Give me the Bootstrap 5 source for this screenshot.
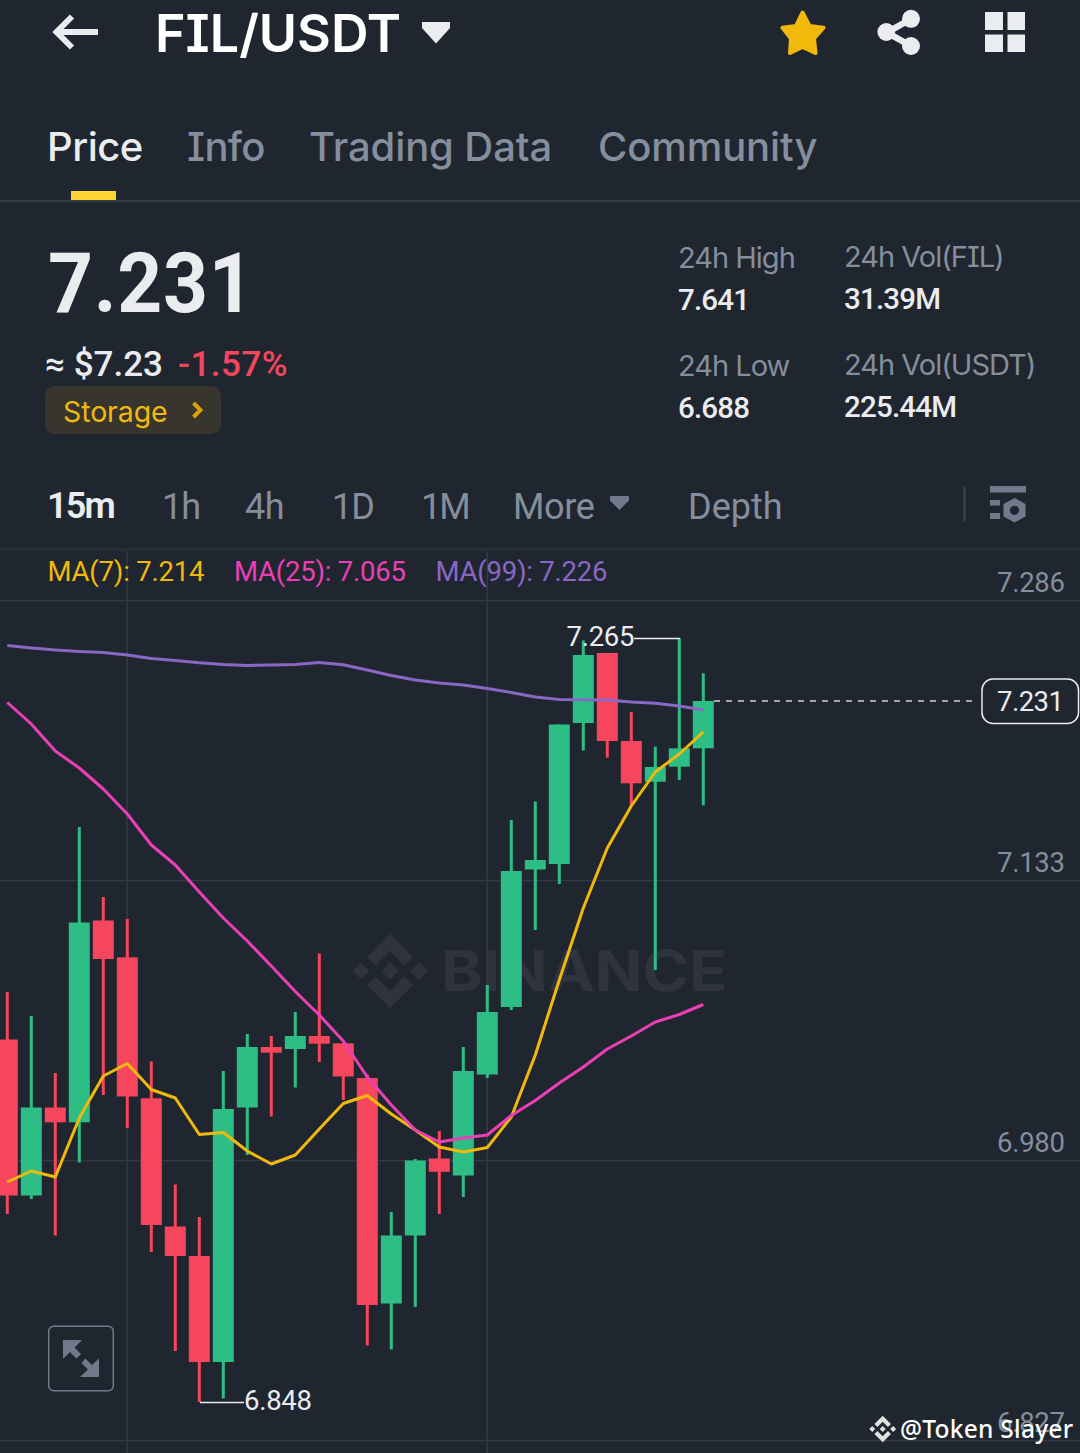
<!DOCTYPE html>
<html lang="en">
<head>
<meta charset="utf-8">
<meta name="viewport" content="width=device-width, initial-scale=1">
<title>FIL/USDT</title>
<link href="https://cdn.jsdelivr.net/npm/bootstrap@5.3.0/dist/css/bootstrap.min.css" rel="stylesheet">
<style>
  body { background: #202630; color: #eaecef; font-family: Inter, "Liberation Sans", sans-serif; font-feature-settings: "cv08" 1; width: 1080px; overflow-x: hidden; }
  svg { display: block; }
  .din { font-family: Roboto, "Liberation Sans", sans-serif; white-space: nowrap; }
  .topbar { height: 91px; padding: 0 54px 25px 52px; }
  .pair { font-size: 52px; line-height: 66px; padding-top: 2px; font-weight: 600; color: #fff; width: 244px; margin-left: 57px; white-space: nowrap; }
  .tabbar { height: 111px; padding-top: 1px; border-bottom: 2px solid #333b47; padding-left: 47px; }
  .tabbar .nav-link { position: relative; padding: 1px 0 0; font-size: 40px; line-height: 107px; font-weight: 500; color: #848e9c; white-space: nowrap; letter-spacing: -.1px; }
  .tabbar .nav-link.active { color: #eaecef; letter-spacing: -.5px; }
  .tabbar .nav-link.active::after { content: ""; position: absolute; left: 24px; bottom: 0; width: 45px; height: 9px; background: #fcd535; }
  .w-t1 { width: 140px; } .w-t2 { width: 122px; letter-spacing: -.7px !important; } .w-t3 { width: 289px; } .w-t4 { width: 230px; }
  .summary { height: 262px; padding: 40px 0 0 45px; }
  .bigprice { display: inline-block; transform: scaleX(.945); transform-origin: 0 0; font-size: 83px; line-height: 84px; font-weight: 700; margin: 0 0 16px 3px; letter-spacing: .8px; vertical-align: top; }
  .subline { font-size: 35px; line-height: 45px; height: 44px; font-weight: 500; }
  .down { color: #f6465d; letter-spacing: .5px; }
  .pill { width: 176px; height: 48px; border-radius: 10px; background: #37352d; color: #f0b90b; font-size: 28.5px; padding: 0 18px; letter-spacing: -.1px; }
  .stat { margin-bottom: 24px; white-space: nowrap; }
  .stat-k { font-size: 29px; line-height: 42px; color: #848e9c; letter-spacing: -1px; }
  .stat-v { font-size: 29.5px; line-height: 42px; font-weight: 500; letter-spacing: -.8px; }
  .col-a { width: 166px; margin-top: -5px; }
  .col-b { width: 236px; margin-top: -6px; }
  .intervals { height: 87px; border-bottom: 3px solid #2a303b; font-size: 36px; line-height: 84px; color: #848e9c; padding: 0 54px 0 47px; }
  .intervals span { padding-top: 2px; }
  .intervals .on { color: #eaecef; font-weight: 600; letter-spacing: -1.8px; padding-top: 0; }
  .w1 { width: 115px; } .w2 { width: 83px; letter-spacing: -1px; } .w3 { width: 87px; letter-spacing: -.6px; } .w4 { width: 89px; letter-spacing: -1px; } .w5 { width: 92px; letter-spacing: -2px; } .w6 { width: 97px; letter-spacing: -.4px; } .w7 { width: 78px; }
  .vrule { width: 3px; height: 36px; background: #333b47; margin-top: -5px; }
  .chart text { font-family: Roboto, "Liberation Sans", sans-serif; font-size: 27.5px; }
  .chart .wm { font-family: Inter, sans-serif; font-size: 56.5px; font-weight: 700; font-feature-settings: normal; }
  .chart .tag { font-family: "Noto Sans", sans-serif; font-size: 24.5px; font-weight: 500; }
</style>
</head>
<body>
<header class="topbar d-flex align-items-center">
  <svg width="46" height="38" viewBox="0 0 46 38" fill="none" stroke="#eaecef" stroke-width="6"><path d="M46 18H5M20 2.500 4.500 18 20 33.500"/></svg>
  <h1 class="pair mb-0">FIL/USDT</h1>
  <svg width="28" height="22" viewBox="0 0 28 22" style="margin-left:23px"><path fill="#eaecef" d="M0 0h28v6L14 21.500 0 6z"/></svg>
  <svg class="ms-auto" width="46" height="48" viewBox="0 0 46 48"><path fill="#f0b90b" stroke="#f0b90b" stroke-width="4" stroke-linejoin="round" d="M22.500 3.500 29.500 17 43.500 18.700 34 29.500 35.500 44 22.500 38 10 44 11 29.500 2.500 18.700 16 17z"/></svg>
  <svg width="44" height="48" viewBox="0 0 44 48" style="margin-left:51px"><g fill="#eaecef"><circle cx="9.300" cy="23" r="8.900"/><circle cx="34" cy="9.800" r="9"/><circle cx="34" cy="37" r="9"/></g><path d="M34 10 10 23.500 34 37" fill="none" stroke="#eaecef" stroke-width="6.500"/></svg>
  <svg width="41" height="40" viewBox="0 0 41 40" fill="#eaecef" style="margin-left:64px;margin-top:-2px"><path d="M0 0h18v18H0zM22.500 0H40v18H22.500zM0 22.500h18V40H0zM22.500 22.500H40V40H22.500z"/></svg>
</header>
<nav class="tabbar nav flex-nowrap">
  <a class="nav-link active w-t1">Price</a>
  <a class="nav-link w-t2">Info</a>
  <a class="nav-link w-t3">Trading Data</a>
  <a class="nav-link w-t4">Community</a>
</nav>
<section class="summary d-flex">
  <div style="width:633px">
    <div class="bigprice din">7.231</div>
    <div class="subline din d-flex"><span style="width:133px">≈ $7.23</span><span class="down">-1.57%</span></div>
    <div class="pill d-flex align-items-center justify-content-between"><span class="pt-1">Storage</span>
      <svg width="11" height="18" viewBox="0 0 11 18" fill="none" stroke="#d9a305" stroke-width="4"><path d="M1.500 2 8.500 9 1.500 16"/></svg>
    </div>
  </div>
  <div class="col-a">
    <div class="stat"><div class="stat-k">24h High</div><div class="stat-v din">7.641</div></div>
    <div class="stat"><div class="stat-k">24h Low</div><div class="stat-v din">6.688</div></div>
  </div>
  <div class="col-b">
    <div class="stat"><div class="stat-k">24h Vol(FIL)</div><div class="stat-v din">31.39M</div></div>
    <div class="stat"><div class="stat-k">24h Vol(USDT)</div><div class="stat-v din">225.44M</div></div>
  </div>
</section>
<div class="intervals din d-flex align-items-center">
  <span class="on w1">15m</span><span class="w2">1h</span><span class="w3">4h</span><span class="w4">1D</span><span class="w5">1M</span><span class="w6">More</span>
  <svg class="w7" height="14" viewBox="0 0 78 14" style="margin-top:-6px"><path fill="#707a8a" d="M0 0h19v4.500L9.500 14 0 4.500z"/></svg>
  <span>Depth</span>
  <span class="vrule ms-auto"></span>
  <svg width="36" height="37" viewBox="0 0 36 37" fill="#707a8a" style="margin-left:24px;margin-top:-4px"><path d="M0 0h36v6.500H0zM0 14h10v5.500H0zM0 27h10v6H0z"/><path fill-rule="evenodd" d="M24.500 12 35.500 18v12.500L24.500 36.500 13.500 30.500V18zM24.500 19.700a4.600 4.600 0 1 0 0 9.200 4.600 4.600 0 1 0 0-9.200z"/></svg>
</div>
<svg class="chart" width="1080" height="902" viewBox="0 551 1080 902">
  <defs>
    <g id="bn"><path d="M0-37 23-14 14.500-5.500 0-20-14.500-5.500-23-14zM0 37 23 14 14.500 5.500 0 20-14.500 5.500-23 14zM0-8.500 8.500 0 0 8.500-8.500 0zM-29-8.500-20.500 0-29 8.500-37.500 0zM29-8.500 37.500 0 29 8.500 20.500 0z"/></g>
  </defs>
  <g fill="#2f333e"><use href="#bn" x="390" y="971"/><text class="wm" x="441" y="991" textLength="286" lengthAdjust="spacingAndGlyphs">BINANCE</text></g>
  <path d="M0 600.500H1080M0 880.500H1080M0 1160.500H1080M0 1440.500H1080M127.200 551V1453M487.300 551V1453" stroke="#333a46" stroke-width="1.500"/>
  <g id="candles"></g>
  <g id="lines" fill="none" stroke-width="3" stroke-linejoin="round"></g>
  <path d="M634 638.500H680M200 1402.500H244" stroke="#eaecef" stroke-width="1.500"/>
  <path d="M714 701H973" stroke="#d0d2d6" stroke-width="1.600" stroke-dasharray="6 6"/>
  <rect x="982" y="679" width="96.500" height="44.500" rx="11" fill="#202630" stroke="#eaecef" stroke-width="1.500"/>
  <g fill="#eaecef">
    <text x="566.500" y="646" textLength="68">7.265</text>
    <text x="244" y="1410" textLength="68">6.848</text>
    <text x="997" y="711" textLength="67">7.231</text>
  </g>
  <text x="47.500" y="581" textLength="157" fill="#f0b90b">MA(7): 7.214</text>
  <text x="234" y="581" textLength="172" fill="#eb40b5">MA(25): 7.065</text>
  <text x="435.500" y="581" textLength="172" fill="#8a67c5">MA(99): 7.226</text>
  <g fill="#848e9c">
    <text x="997" y="592" textLength="68">7.286</text>
    <text x="997" y="872" textLength="68">7.133</text>
    <text x="997" y="1152" textLength="68">6.980</text>
    <text x="997" y="1432" textLength="68">6.827</text>
  </g>
  <rect x="48.700" y="1326.200" width="64.600" height="64.600" rx="5" fill="none" stroke="#707a8a" stroke-width="1.500"/>
  <path fill="#707a8a" d="M63 1340H82L74.500 1347.500 81 1354 76.500 1358.500 70 1352 63 1359zM99 1377H80L88 1369.500 81.500 1363 85.500 1358.500 92 1365 99 1358.500z"/>
  <use href="#bn" transform="translate(882.700 1429) scale(.36)" fill="#e0e0e0"/>
  <text class="tag" x="900" y="1438" textLength="173" fill="#fff">@Token Slayer</text>
</svg>
<script src="https://cdn.jsdelivr.net/npm/bootstrap@5.3.0/dist/js/bootstrap.bundle.min.js"></script>
<script>
  // Each candle: direction, wick top, body top, body bottom, wick bottom
  const candles = [
    ['d',992,1039.5,1195.5,1214],['u',1016,1107.5,1195.5,1199],['d',1073,1107.5,1122.3,1235.5],['u',827,922.5,1122.3,1162.5],
    ['d',897,920.5,959,1095],['d',919,957.3,1096.5,1128],['d',1061.5,1098.3,1225,1252],['d',1184.5,1226.5,1256,1351],
    ['d',1217,1256,1362,1402],['u',1071,1109,1362,1398.5],['u',1034,1047,1107.5,1155],['d',1036,1047,1052.7,1116.5],
    ['u',1012,1036,1049,1087.5],['d',953.5,1036,1043.7,1062],['d',1043,1043.3,1076.5,1100],['d',1074.5,1078,1305,1345.5],
    ['u',1212,1235.5,1303.5,1349.5],['u',1159,1160.5,1235.5,1307],['d',1131,1158.5,1171.8,1214],['u',1047,1071,1175.5,1197],
    ['u',985,1012,1074.5,1078],['u',820,871,1007,1010],['u',801.5,860,869.5,930],['u',724.5,724.5,864,884],
    ['u',640.5,655,723,750.5],['d',653,653,741,757.7],['d',712,741,783.3,806],['u',746.7,767,781.7,970],
    ['u',638,748.3,766.7,780],['u',673.3,701,748.3,805.3]
  ];
  const averages = {
    '#8a67c5': [645.5,648,650,651.5,652.5,655,658.5,660.5,662.8,664.5,665.5,665,664.5,662.5,664.8,670,675.5,680,683,685,688.5,692.5,697,699.5,699.8,700,702,703.3,706,710],
    '#f0b90b': [1182,1171,1177,1118,1076,1063.5,1089.5,1098,1134.5,1132.5,1151,1164,1155,1129,1103.5,1095.5,1114,1130,1147,1152,1147.5,1117,1055,980,908,848,806,772,754,732],
    '#eb40b5': [702.5,724,751,768,789,814,845,865,892,918,941,966,991.5,1015,1041,1077,1105,1130,1142,1138,1135,1115.5,1100.5,1083,1067,1049,1036,1022,1014.5,1004.5]
  };
  const cx = i => 7.3 + 24 * i;
  document.getElementById('candles').innerHTML = candles.map(([d, h, t, b, l], i) =>
    `<g fill="${d === 'u' ? '#2ebd85' : '#f6465d'}"><rect x="${cx(i) - 1.5}" y="${h}" width="3" height="${l - h}"/><rect x="${cx(i) - 10.5}" y="${t}" width="21" height="${b - t}"/></g>`).join('');
  document.getElementById('lines').innerHTML = Object.entries(averages).map(([c, ys]) =>
    `<polyline stroke="${c}" points="${ys.map((y, i) => cx(i) + ',' + y).join(' ')}"/>`).join('');
</script>
</body>
</html>
